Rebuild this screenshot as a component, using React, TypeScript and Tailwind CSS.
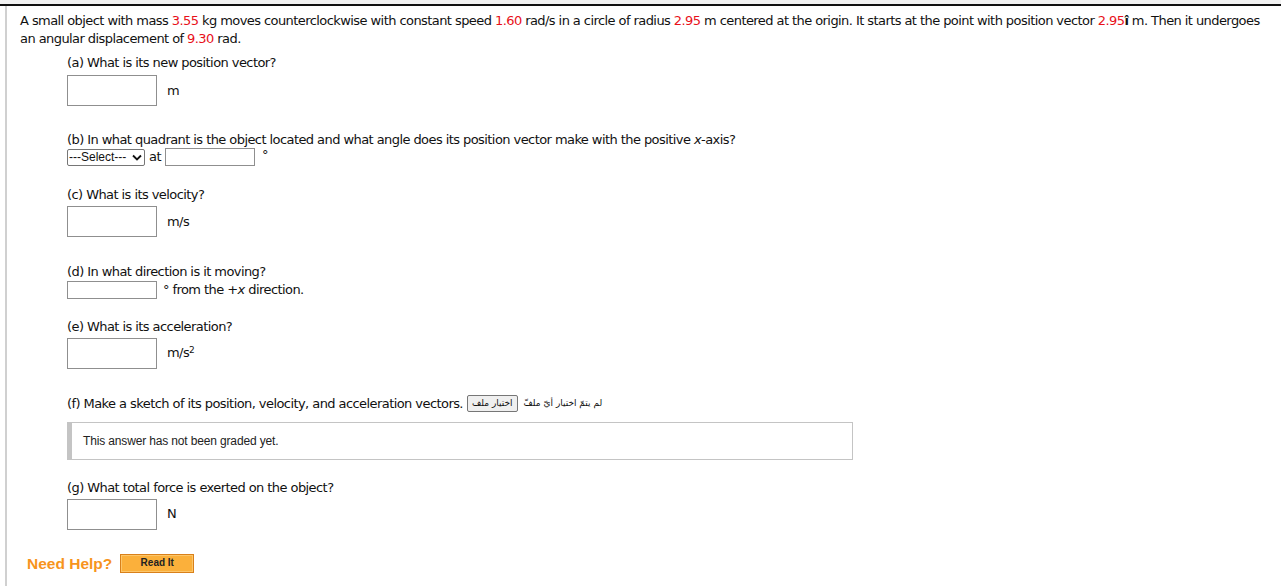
import React from "react";

const Red = ({ children }: { children: React.ReactNode }) => (
  <span className="text-[#e8101a]">{children}</span>
);

const Box = ({ tall = true, w = "w-[90px]" }: { tall?: boolean; w?: string }) => (
  <div className={`${w} ${tall ? "h-[31px]" : "h-[18px]"} border border-[#8f8f8f] bg-white`} />
);

const App = () => {
  return (
    <div className="w-[1281px] h-[586px] overflow-hidden bg-white text-[13px] text-[#111] font-['DejaVu_Sans',sans-serif] tracking-[-0.57px]">
      <div className="h-[4px] bg-[#f2f2f2]" />
      <div className="h-[2px] bg-[#111]" />
      <div className="flex">
        <div className="w-[2px] ml-[5px] bg-[#d0d0d0] h-[580px]" />
        <div className="pl-[13px] pt-[6px] flex-1">
          <p className="leading-[18px] pr-4">
            A small object with mass <Red>3.55</Red> kg moves counterclockwise with constant speed{" "}
            <Red>1.60</Red> rad/s in a circle of radius <Red>2.95</Red> m centered at the origin. It starts at
            the point with position vector <Red>2.95</Red>
            <b>î</b> m. Then it undergoes an angular displacement of <Red>9.30</Red> rad.
          </p>

          <div className="pl-[47px]">
            <p className="mt-[6px] leading-[18px]">(a) What is its new position vector?</p>
            <div className="flex items-center gap-[10px] mt-[3px]">
              <Box />
              <span>m</span>
            </div>

            <p className="mt-[25px] leading-[18px]">
              (b) In what quadrant is the object located and what angle does its position vector make with the
              positive <i>x</i>-axis?
            </p>
            <div className="flex items-center h-[18px] -mt-[1px]">
              <div className="w-[78px] h-[17px] border border-[#767676] rounded-[2px] flex items-center justify-between pl-[1px] pr-[2px] font-['Liberation_Sans',sans-serif] text-[12px] tracking-normal">
                <span>---Select---</span>
                <svg width="10" height="7" viewBox="0 0 10 7">
                  <path d="M1 1.5 L5 5.5 L9 1.5" fill="none" stroke="#111" strokeWidth="1.8" />
                </svg>
              </div>
              <span className="ml-[4px] mr-[4px]">at</span>
              <div className="w-[90px] h-[18px] border border-[#8f8f8f]" />
              <span className="ml-[7px] -mt-[4px]">°</span>
            </div>

            <p className="mt-[20px] leading-[18px]">(c) What is its velocity?</p>
            <div className="flex items-center gap-[10px] mt-[2px]">
              <Box />
              <span>m/s</span>
            </div>

            <p className="mt-[26px] leading-[18px]">(d) In what direction is it moving?</p>
            <div className="flex items-center gap-[6px] -mt-[1px]">
              <Box tall={false} />
              <span>
                ° from the +<i>x</i> direction.
              </span>
            </div>

            <p className="mt-[18px] leading-[18px]">(e) What is its acceleration?</p>
            <div className="flex items-center gap-[10px] mt-[2px]">
              <Box />
              <span>
                m/s<sup className="text-[9px]">2</sup>
              </span>
            </div>

            <div className="flex items-center mt-[26px] h-[18px]">
              <span>(f) Make a sketch of its position, velocity, and acceleration vectors.</span>
              <button className="ml-[4px] h-[17px] px-[4px] border border-[#767676] rounded-[2px] bg-[#efefef] text-[9px] tracking-normal font-['DejaVu_Sans',sans-serif] leading-none">
                اختيار ملف
              </button>
              <span className="ml-[6px] text-[9px] tracking-normal">لم يتمّ اختيار أيّ ملفّ</span>
            </div>
            <div className="mt-[9px] w-[786px] h-[38px] border border-[#c4c4c4] border-l-[5px] border-l-[#c4c4c4] flex items-center pl-[11px] font-['Liberation_Sans',sans-serif] text-[12px] tracking-[-0.15px] text-[#222]">
              This answer has not been graded yet.
            </div>

            <p className="mt-[19px] leading-[18px]">(g) What total force is exerted on the object?</p>
            <div className="flex items-center gap-[10px] mt-[2px]">
              <Box />
              <span>N</span>
            </div>
          </div>

          <div className="flex items-center mt-[22px] ml-[7px]">
            <span className="font-['Liberation_Sans',sans-serif] font-bold text-[15.5px] text-[#f7941d] tracking-normal">
              Need Help?
            </span>
            <button className="ml-[8px] w-[74px] h-[19px] border border-[#d9801a] bg-[#fbb03b] shadow-[inset_0_0_0_1px_#fcc66a] font-['Liberation_Sans',sans-serif] font-bold text-[10px] text-[#222] tracking-normal leading-none">
              Read It
            </button>
          </div>
        </div>
      </div>
    </div>
  );
};

export default App;
